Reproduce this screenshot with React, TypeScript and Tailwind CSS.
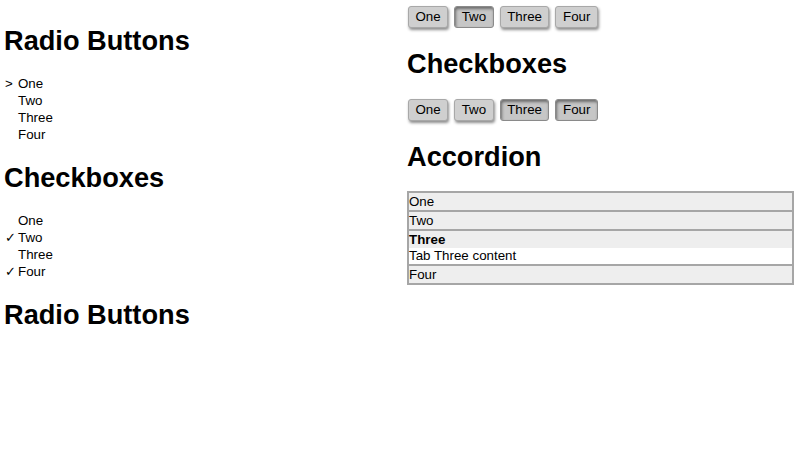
import React from "react";

const items = ["One", "Two", "Three", "Four"];

function Heading({ children }: { children: React.ReactNode }) {
  return (
    <h1 className="my-[19px] text-[27.2px] font-bold leading-[31px]">{children}</h1>
  );
}

function MarkList({ marks }: { marks: string[] }) {
  return (
    <ul className="pl-[1px]">
      {items.map((label, i) => (
        <li key={label} className="flex leading-[17px]">
          <span className="w-[13px] shrink-0">{marks[i]}</span>
          <span>{label}</span>
        </li>
      ))}
    </ul>
  );
}

function ButtonRow({ pressed }: { pressed: boolean[] }) {
  return (
    <div className="flex h-[24px] items-start gap-[6px] pt-[1px] pl-[1px]">
      {items.map((label, i) => (
        <button
          key={label}
          className={
            pressed[i]
              ? "h-[22px] rounded-[3px] border border-[#8a8a8a] bg-[#c6c6c6] px-[6.5px] leading-[20px] shadow-[inset_1px_2px_3px_rgba(0,0,0,0.45)]"
              : "h-[22px] rounded-[3px] border border-[#a8a8a8] bg-[#cfcfcf] px-[6.5px] leading-[20px] shadow-[1px_2px_3px_rgba(0,0,0,0.45)]"
          }
        >
          {label}
        </button>
      ))}
    </div>
  );
}

function Accordion() {
  return (
    <div className="mt-[1px] divide-y-2 divide-[#a6a6a6] border-2 border-[#a6a6a6]">
      {items.map((label) =>
        label === "Three" ? (
          <div key={label}>
            <div className="bg-[#eeeeee] leading-[17px] font-bold">{label}</div>
            <div className="bg-white leading-[16px]">Tab Three content</div>
          </div>
        ) : (
          <div key={label} className="bg-[#eeeeee] leading-[17px]">
            {label}
          </div>
        )
      )}
    </div>
  );
}

export default function App() {
  return (
    <div className="flex h-[450px] w-[800px] bg-white font-['Liberation_Sans',Arial,sans-serif] text-[13.33px] text-black">
      <div className="w-[400px] px-[4px] pt-[6px]">
        <Heading>Radio Buttons</Heading>
        <MarkList marks={[">", "", "", ""]} />
        <Heading>Checkboxes</Heading>
        <MarkList marks={["", "✓", "", "✓"]} />
        <Heading>Radio Buttons</Heading>
      </div>
      <div className="w-[400px] pl-[7px] pr-[6px] pt-[5px]">
        <ButtonRow pressed={[false, true, false, false]} />
        <Heading>Checkboxes</Heading>
        <ButtonRow pressed={[false, false, true, true]} />
        <Heading>Accordion</Heading>
        <Accordion />
      </div>
    </div>
  );
}
